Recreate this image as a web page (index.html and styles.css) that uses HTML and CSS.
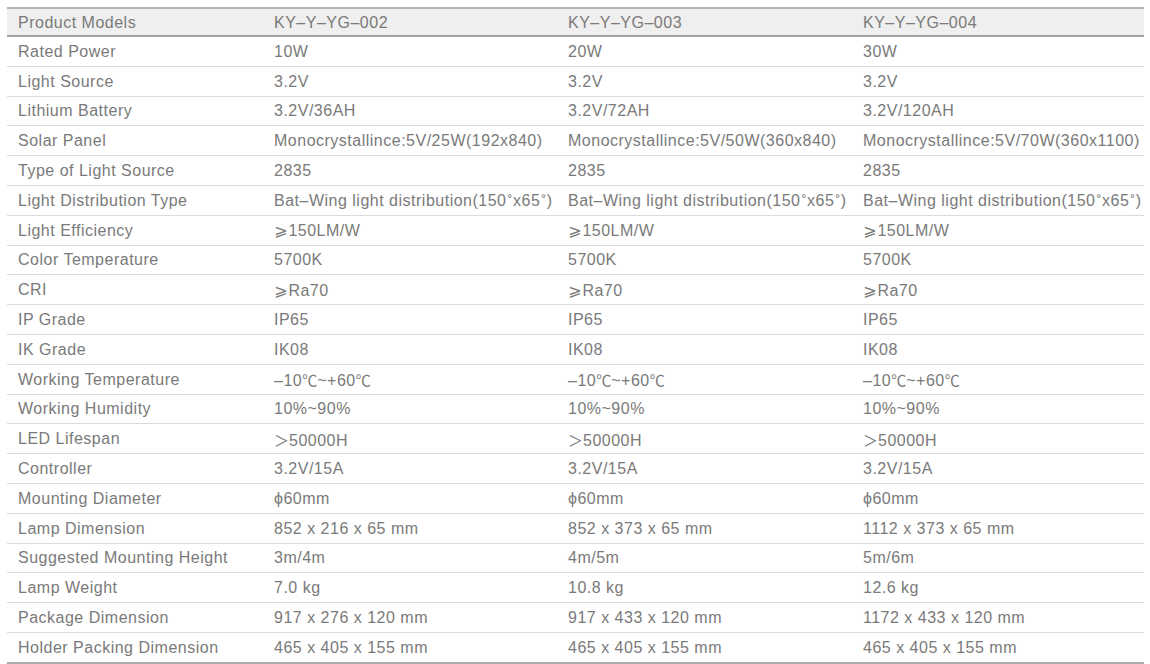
FILE: index.html
```html
<!DOCTYPE html>
<html lang="en">
<head>
<meta charset="utf-8">
<title>Product Specifications</title>
<link rel="stylesheet" href="styles.css">
</head>
<body>
<table class="spec">
  <colgroup>
    <col class="c1"><col class="c2"><col class="c3"><col class="c4">
  </colgroup>
  <thead>
    <tr><th>Product Models</th><th>KY–Y–YG–002</th><th>KY–Y–YG–003</th><th>KY–Y–YG–004</th></tr>
  </thead>
  <tbody>
    <tr><td>Rated Power</td><td>10W</td><td>20W</td><td>30W</td></tr>
    <tr><td>Light Source</td><td>3.2V</td><td>3.2V</td><td>3.2V</td></tr>
    <tr><td>Lithium Battery</td><td>3.2V/36AH</td><td>3.2V/72AH</td><td>3.2V/120AH</td></tr>
    <tr><td>Solar Panel</td><td>Monocrystallince:5V/25W(192x840)</td><td>Monocrystallince:5V/50W(360x840)</td><td>Monocrystallince:5V/70W(360x1100)</td></tr>
    <tr><td>Type of Light Source</td><td>2835</td><td>2835</td><td>2835</td></tr>
    <tr><td>Light Distribution Type</td><td>Bat–Wing light distribution(150<span class="deg">˚</span>x65<span class="deg">˚</span>)</td><td>Bat–Wing light distribution(150<span class="deg">˚</span>x65<span class="deg">˚</span>)</td><td>Bat–Wing light distribution(150<span class="deg">˚</span>x65<span class="deg">˚</span>)</td></tr>
    <tr><td>Light Efficiency</td><td><span class="sym">⩾</span>150LM/W</td><td><span class="sym">⩾</span>150LM/W</td><td><span class="sym">⩾</span>150LM/W</td></tr>
    <tr><td>Color Temperature</td><td>5700K</td><td>5700K</td><td>5700K</td></tr>
    <tr><td>CRI</td><td><span class="sym">⩾</span>Ra70</td><td><span class="sym">⩾</span>Ra70</td><td><span class="sym">⩾</span>Ra70</td></tr>
    <tr><td>IP Grade</td><td>IP65</td><td>IP65</td><td>IP65</td></tr>
    <tr><td>IK Grade</td><td>IK08</td><td>IK08</td><td>IK08</td></tr>
    <tr><td>Working Temperature</td><td>–10<span class="cjk">℃</span>~+60<span class="cjk">℃</span></td><td>–10<span class="cjk">℃</span>~+60<span class="cjk">℃</span></td><td>–10<span class="cjk">℃</span>~+60<span class="cjk">℃</span></td></tr>
    <tr><td>Working Humidity</td><td>10%~90%</td><td>10%~90%</td><td>10%~90%</td></tr>
    <tr><td>LED Lifespan</td><td><span class="cjk">＞</span>50000H</td><td><span class="cjk">＞</span>50000H</td><td><span class="cjk">＞</span>50000H</td></tr>
    <tr><td>Controller</td><td>3.2V/15A</td><td>3.2V/15A</td><td>3.2V/15A</td></tr>
    <tr><td>Mounting Diameter</td><td>ϕ60mm</td><td>ϕ60mm</td><td>ϕ60mm</td></tr>
    <tr><td>Lamp Dimension</td><td>852 x 216 x 65 mm</td><td>852 x 373 x 65 mm</td><td>1112 x 373 x 65 mm</td></tr>
    <tr><td>Suggested Mounting Height</td><td>3m/4m</td><td>4m/5m</td><td>5m/6m</td></tr>
    <tr><td>Lamp Weight</td><td>7.0 kg</td><td>10.8 kg</td><td>12.6 kg</td></tr>
    <tr><td>Package Dimension</td><td>917 x 276 x 120 mm</td><td>917 x 433 x 120 mm</td><td>1172 x 433 x 120 mm</td></tr>
    <tr><td>Holder Packing Dimension</td><td>465 x 405 x 155 mm</td><td>465 x 405 x 155 mm</td><td>465 x 405 x 155 mm</td></tr>
  </tbody>
</table>
</body>
</html>
```

FILE: styles.css
```css
html, body {
  margin: 0;
  padding: 0;
  background: #ffffff;
}

body {
  padding: 7px 0 0 7px;
}

.spec {
  border-collapse: collapse;
  table-layout: fixed;
  width: 1137px;
  font-family: "Liberation Sans", Arial, "Noto Sans CJK SC", sans-serif;
  font-size: 16px;
  letter-spacing: 0.5px;
  color: #7a7a7a;
}

.c1 { width: 256px; }
.c2 { width: 294px; }
.c3 { width: 295px; }
.c4 { width: 292px; }

.spec th,
.spec td {
  text-align: left;
  font-weight: normal;
  padding: 0 0 0 11px;
  white-space: nowrap;
  overflow: visible;
  vertical-align: middle;
}

.spec thead th {
  background: #efefef;
  height: 25px;
  padding-top: 1px;
  border-top: 2px solid #b4b4b4;
  border-bottom: 2px solid #a2a2a2;
}

.spec tbody td {
  height: 27.8px;
  padding-top: 1px;
  border-bottom: 1px solid #dadada;
}

.spec tbody tr:last-child td {
  border-bottom: 2px solid #ababab;
}

.deg {
  font-family: "DejaVu Sans", sans-serif;
  font-size: 13px;
  letter-spacing: 0;
}

.sym {
  font-family: "DejaVu Sans", "Noto Sans CJK SC", sans-serif;
  font-size: 16px;
  letter-spacing: 0;
  margin-right: 1px;
}

.cjk {
  font-family: "Noto Sans CJK SC", sans-serif;
  letter-spacing: 0;
  font-size: 15px;
}
```
